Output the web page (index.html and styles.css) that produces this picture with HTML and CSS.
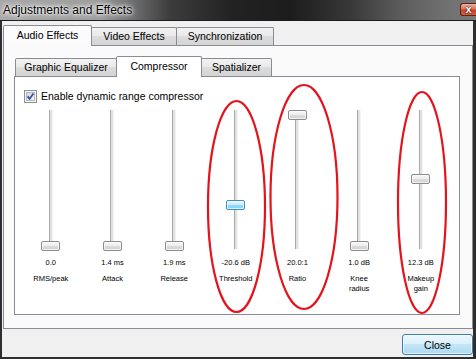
FILE: index.html
```html
<!DOCTYPE html>
<html>
<head>
<meta charset="utf-8">
<title>Adjustments and Effects</title>
<link rel="stylesheet" href="styles.css">
</head>
<body>
<div class="window">
  <div class="titlebar">
    <span class="title">Adjustments and Effects</span>
    <span class="close-x">x</span>
  </div>
  <div class="client">
    <div class="tabs outer-tabs">
      <div class="tab tab-sel w-audio">Audio Effects</div>
      <div class="tab w-video">Video Effects</div>
      <div class="tab w-sync">Synchronization</div>
    </div>
    <div class="panel outer-panel">
      <div class="tabs inner-tabs">
        <div class="tab w-eq">Graphic Equalizer</div>
        <div class="tab tab-sel tab-white w-comp">Compressor</div>
        <div class="tab w-spat">Spatializer</div>
      </div>
      <div class="panel inner-panel">
        <label class="check-row">
          <svg class="checkbox" width="13" height="13" viewBox="0 0 13 13">
            <defs>
              <linearGradient id="cbg" x1="0" y1="0" x2="1" y2="1">
                <stop offset="0" stop-color="#cfd3d8"/>
                <stop offset="1" stop-color="#f7f8f9"/>
              </linearGradient>
            </defs>
            <rect x="0.5" y="0.5" width="12" height="12" fill="#f6f6f6" stroke="#8e8f8f"/>
            <rect x="2.5" y="2.5" width="8" height="8" fill="url(#cbg)" stroke="#b4b9bf"/>
            <path d="M3.6 6.4 L5.6 8.9 L9.4 3.4" fill="none" stroke="#2f4f9c" stroke-width="1.7"/>
          </svg>
          <span>Enable dynamic range compressor</span>
        </label>
        <div class="sliders">
          <div class="col">
            <div class="slider"><div class="track"></div><div class="thumb" style="top:131px"></div></div>
            <div class="value">0.0</div>
            <div class="name">RMS/peak</div>
          </div>
          <div class="col">
            <div class="slider"><div class="track"></div><div class="thumb" style="top:131px"></div></div>
            <div class="value">1.4 ms</div>
            <div class="name">Attack</div>
          </div>
          <div class="col">
            <div class="slider"><div class="track"></div><div class="thumb" style="top:131px"></div></div>
            <div class="value">1.9 ms</div>
            <div class="name">Release</div>
          </div>
          <div class="col">
            <div class="slider"><div class="track"></div><div class="thumb thumb-hot" style="top:90px"></div></div>
            <div class="value">-20.6 dB</div>
            <div class="name">Threshold</div>
          </div>
          <div class="col">
            <div class="slider"><div class="track"></div><div class="thumb" style="top:0px"></div></div>
            <div class="value">20.0:1</div>
            <div class="name">Ratio</div>
          </div>
          <div class="col">
            <div class="slider"><div class="track"></div><div class="thumb" style="top:131px"></div></div>
            <div class="value">1.0 dB</div>
            <div class="name">Knee<br>radius</div>
          </div>
          <div class="col">
            <div class="slider"><div class="track"></div><div class="thumb" style="top:64px"></div></div>
            <div class="value">12.3 dB</div>
            <div class="name">Makeup<br>gain</div>
          </div>
        </div>
      </div>
    </div>
    <div class="buttons">
      <button class="btn">Close</button>
    </div>
  </div>
  <svg class="annotations" width="476" height="359" viewBox="0 0 476 359">
    <ellipse cx="236.5" cy="206.5" rx="28.5" ry="105.5" fill="none" stroke="#e5131b" stroke-width="2.2"/>
    <ellipse cx="304" cy="197" rx="33.5" ry="112" fill="none" stroke="#e5131b" stroke-width="2.2"/>
    <ellipse cx="422" cy="202.5" rx="24" ry="110.5" fill="none" stroke="#e5131b" stroke-width="2.2"/>
  </svg>
</div>
</body>
</html>
```

FILE: styles.css
```css
* { box-sizing: border-box; }

html, body {
  margin: 0;
  padding: 0;
}

body {
  width: 476px;
  height: 359px;
  overflow: hidden;
  background: #f0f0f0;
  font-family: "Liberation Sans", Arial, sans-serif;
  font-size: 10.5px;
  color: #000;
}

.window {
  position: relative;
  width: 476px;
  height: 359px;
  display: flex;
  flex-direction: column;
}

/* ---------- title bar ---------- */
.titlebar {
  flex: none;
  height: 21px;
  display: flex;
  justify-content: space-between;
  align-items: flex-start;
  border-bottom: 1px solid #1d1d1d;
  background: linear-gradient(to right,
    #a9a9a9 0px, #9c9c9c 100px, #6c6c6c 135px, #3c3c3c 170px,
    #232323 230px, #1c1c1c 290px, #383838 350px, #5c5c5c 400px,
    #6e6e6e 440px, #7a7a7a 476px);
}

.title {
  padding-left: 3px;
  font-size: 12px;
  line-height: 20px;
  color: #000;
  text-shadow: 0 0 6px #fff, 0 0 4px #fff, 0 0 2px #fff;
}

.close-x {
  width: 16px;
  height: 13px;
  margin-top: 3px;
  border: 1px solid #5e2418;
  border-right: none;
  border-radius: 3px 0 0 3px;
  background: linear-gradient(#eab3a6 0%, #d9785f 45%, #c5442a 55%, #d2603f 100%);
  color: #fff;
  font-weight: bold;
  font-size: 11px;
  line-height: 10px;
  text-align: center;
  text-shadow: 0 0 2px #3a0d05, 0 0 1px #3a0d05;
}

/* ---------- client area ---------- */
.client {
  flex: 1;
  display: flex;
  flex-direction: column;
  border-left: 2px solid #2e2e2e;
  border-right: 3px solid #2e2e2e;
  border-bottom: 2px solid #2e2e2e;
  padding: 4px 0 2px 1px;
  background: #f0f0f0;
}

/* ---------- tabs ---------- */
.tabs {
  position: relative;
  z-index: 1;
  flex: none;
  height: 20px;
  display: flex;
  align-items: flex-end;
}

.tab {
  height: 18px;
  margin-left: -1px;
  border: 1px solid #898c95;
  border-bottom: none;
  border-radius: 2px 2px 0 0;
  background: linear-gradient(#f2f2f2 0%, #e9e9e9 50%, #dcdcdc 50%, #d4d4d4 100%);
  text-align: center;
  line-height: 16px;
  white-space: nowrap;
}

.tab:first-child { margin-left: 0; }

.tab-sel {
  position: relative;
  height: 21px;
  margin-bottom: -1px;
  background: #fbfbfb;
  line-height: 19px;
  z-index: 2;
}

.tab-white { background: #fff; }

.w-audio { width: 89px; }
.w-video { width: 86px; }
.w-sync { width: 98px; }

.inner-tabs .tab:first-child { margin-left: 1px; }
.w-eq { width: 102px; }
.w-comp { width: 86px; }
.w-spat { width: 71px; }

/* ---------- panels ---------- */
.panel {
  border: 1px solid #898c95;
}

.outer-panel {
  flex: none;
  height: 284px;
  display: flex;
  flex-direction: column;
  padding: 10px 12px 13px 10px;
  background: #fafafa;
}

.inner-panel {
  flex: 1;
  background: #fff;
  padding: 13px 0 0 0;
}

.check-row {
  display: flex;
  align-items: center;
  gap: 4px;
  height: 13px;
  padding-left: 9px;
  line-height: 13px;
}

.checkbox { flex: none; display: block; }

/* ---------- sliders ---------- */
.sliders {
  display: grid;
  grid-template-columns: repeat(7, 61.67px);
  margin-top: 7px;
  padding-left: 5px;
}

.col {
  display: flex;
  flex-direction: column;
  align-items: center;
}

.slider {
  position: relative;
  width: 19px;
  height: 141px;
}

.track {
  width: 4px;
  height: 139px;
  margin: 0 auto;
  border-left: 1px solid #a9a9a9;
  border-right: 1px solid #f4f4f4;
  background: #e2e2e2;
}

.thumb {
  position: absolute;
  left: 0;
  width: 19px;
  height: 10px;
  border: 1px solid #8b8c8d;
  border-radius: 2px;
  background: linear-gradient(#f7f7f7 0%, #ececec 50%, #dcdcdc 50%, #d2d2d2 100%);
  box-shadow: inset 0 0 0 1px rgba(255, 255, 255, 0.7);
}

.thumb-hot {
  border-color: #3c8ec4;
  background: linear-gradient(#e7f8ff 0%, #c4ecfd 50%, #98dcf9 50%, #7fd2f5 100%);
}

.value,
.name {
  font-size: 7.5px;
  line-height: 10px;
  text-align: center;
  color: #000;
  white-space: nowrap;
}

.value { margin-top: 7px; }
.name { margin-top: 6px; }

/* ---------- buttons ---------- */
.buttons {
  flex: none;
  display: flex;
  justify-content: flex-end;
  margin-top: 5px;
}

.btn {
  width: 71px;
  height: 21px;
  padding: 0;
  border: 1px solid #3c7fb1;
  border-radius: 3px;
  background: linear-gradient(#ecf7fd 0%, #dbf0fb 50%, #c2e6f8 50%, #aed9f0 100%);
  box-shadow: inset 0 0 0 1px rgba(255, 255, 255, 0.6);
  font-family: "Liberation Sans", Arial, sans-serif;
  font-size: 10.5px;
  color: #000;
}

/* ---------- annotation overlay ---------- */
.annotations {
  position: absolute;
  top: 0;
  left: 0;
  pointer-events: none;
}
```
